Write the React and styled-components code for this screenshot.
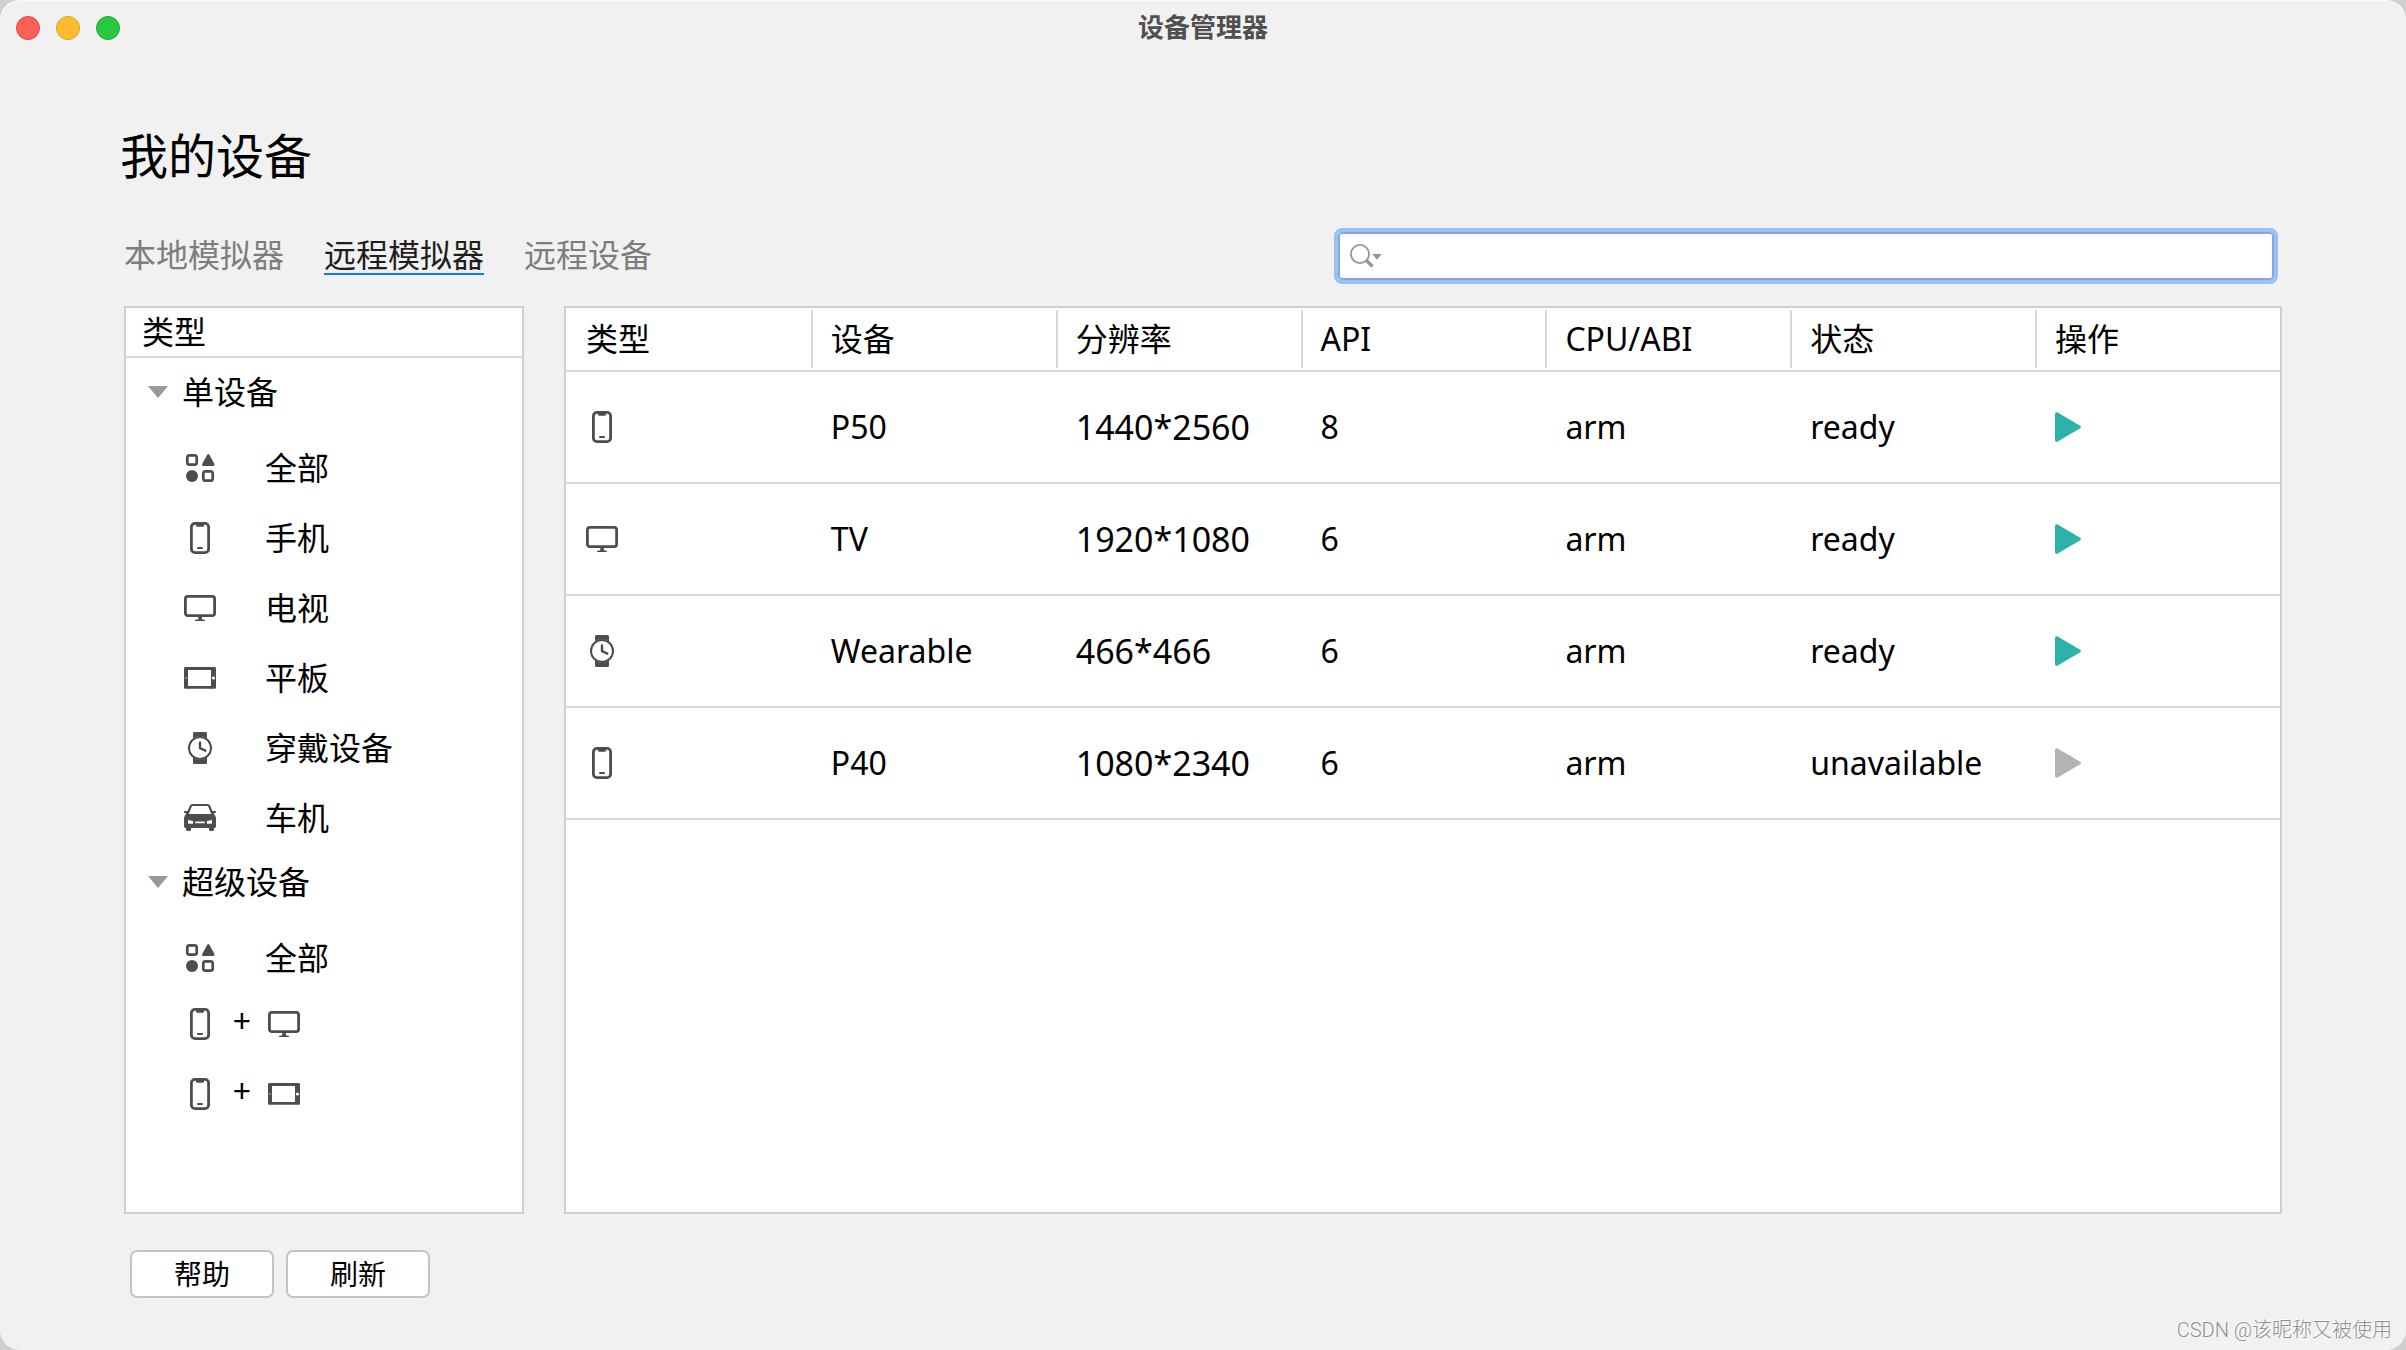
import React, { useState } from "react";
import styled, { createGlobalStyle } from "styled-components";

const tabs = ["本地模拟器", "远程模拟器", "远程设备"];

const singleDevices = [
  { icon: "all", name: "全部" },
  { icon: "phone", name: "手机" },
  { icon: "tv", name: "电视" },
  { icon: "tablet", name: "平板" },
  { icon: "watch", name: "穿戴设备" },
  { icon: "car", name: "车机" },
];

const superDevices = [
  { icon: "all", name: "全部" },
  { icon: "phone", with: "tv" },
  { icon: "phone", with: "tablet" },
];

const columns = ["类型", "设备", "分辨率", "API", "CPU/ABI", "状态", "操作"];

const devices = [
  { icon: "phone", name: "P50", size: "1440*2560", api: 8, abi: "arm", status: "ready" },
  { icon: "tv", name: "TV", size: "1920*1080", api: 6, abi: "arm", status: "ready" },
  { icon: "watch", name: "Wearable", size: "466*466", api: 6, abi: "arm", status: "ready" },
  { icon: "phone", name: "P40", size: "1080*2340", api: 6, abi: "arm", status: "unavailable" },
];

const shapes = {
  all: (
    <>
      <rect x="3.3" y="3.3" width="9.4" height="9.4" rx="2.2" fill="none" stroke="currentColor" strokeWidth="2.7" />
      <rect x="19.3" y="19.3" width="9.4" height="9.4" rx="2.2" fill="none" stroke="currentColor" strokeWidth="2.7" />
      <circle cx="8" cy="24" r="6" />
      <path d="M23.2 2.7c.6-.9 1.700-.9 2.200 0l5 9.300c.5 1-.1 2-1.200 2h-9.800c-1.100 0-1.700-1-1.200-2z" />
    </>
  ),
  phone: (
    <>
      <rect x="7.4" y="1.4" width="17.2" height="29.2" rx="3.6" fill="none" stroke="currentColor" strokeWidth="2.8" />
      <path d="M12 2h8v1.200c0 1-.7 1.500-1.500 1.500h-5c-.8 0-1.500-.5-1.500-1.500zM14 25h4a1 1 0 0 1 0 2h-4a1 1 0 0 1 0-2z" />
    </>
  ),
  tv: (
    <>
      <rect x="1.4" y="4.4" width="29.2" height="19.2" rx="2.4" fill="none" stroke="currentColor" strokeWidth="2.8" />
      <path d="M14.3 24.5h3.600v2.700l3.100.9v.9H11v-.9l3.300-.9z" />
    </>
  ),
  tablet: (
    <>
      <path
        fillRule="evenodd"
        d="M1.600 5h28.800c.9 0 1.600.7 1.600 1.600v18.600c0 .9-.7 1.600-1.600 1.600H1.600c-.9 0-1.600-.7-1.600-1.600V6.600c0-.9.7-1.600 1.600-1.600zM4 8v16h23V8z"
      />
      <circle cx="29.4" cy="16" r="1.6" fill="#fff" />
      <circle cx="2" cy="16" r=".9" fill="#aaa" />
    </>
  ),
  watch: (
    <>
      <path d="M9 6.500V1.600C9 .7 9.700 0 10.600 0h10.800c.9 0 1.600.7 1.600 1.600v4.900c-4-3-10-3-14 0zM9 25.500c4 3 10 3 14 0v4.900c0 .9-.7 1.600-1.600 1.600H10.600c-.9 0-1.600-.7-1.600-1.600z" />
      <circle cx="16" cy="16" r="11" fill="#fff" stroke="currentColor" strokeWidth="2" />
      <path d="M16 10.500v5.700l5.300 2.500" fill="none" stroke="currentColor" strokeWidth="2.4" strokeLinecap="round" strokeLinejoin="round" />
    </>
  ),
  car: (
    <>
      <path
        fillRule="evenodd"
        d="M8.500 2h15c1.200 0 2.200.7 2.700 1.800L28.500 9H31c.6 0 1 .4 1 1s-.4 1.200-1 1.200h-1.600l1.400 1.900c.8 1 1.200 2.200 1.200 3.400v7.700c0 1-.8 1.800-1.800 1.800H30v1.500c0 .9-.7 1.500-1.600 1.500h-1.800c-.9 0-1.600-.6-1.600-1.500V26H7v1.500C7 28.400 6.300 29 5.400 29H3.600C2.700 29 2 28.400 2 27.500V26h-.2C.8 26 0 25.200 0 24.200v-7.700c0-1.200.4-2.400 1.200-3.400l1.400-1.900H1c-.6 0-1-.6-1-1.200s.4-1 1-1h2.500l2.300-5.200C6.300 2.700 7.300 2 8.500 2zM8.900 4c-.6 0-1.100.3-1.300.9L4.800 12h22.400l-2.800-7.100c-.2-.6-.7-.9-1.300-.9z"
      />
      <path d="M4 18l5 1v2.700H5c-.6 0-1-.4-1-1zM28 18l-5 1v2.700h4c.6 0 1-.4 1-1z" fill="#fff" />
      <path d="M12 20.400h8" stroke="#fff" strokeWidth="1.800" strokeLinecap="round" />
    </>
  ),
};

const DeviceIcon = ({ type }) => (
  <IconSvg viewBox="0 0 32 32" aria-hidden="true">
    {shapes[type]}
  </IconSvg>
);

const DeviceGroup = ({ title, items }) => {
  const [open, setOpen] = useState(true);

  return (
    <>
      <GroupBtn aria-expanded={open} onClick={() => setOpen(!open)}>
        <Arrow viewBox="0 0 20 12" $open={open} aria-hidden="true">
          <path d="M0 0h20L10 12z" />
        </Arrow>
        {title}
      </GroupBtn>
      {open && (
        <List>
          {items.map((item) => (
            <li key={item.name || item.with}>
              {item.with ? (
                <ItemBtn $pair aria-label={`${item.icon} + ${item.with}`}>
                  <DeviceIcon type={item.icon} />
                  <Plus>+</Plus>
                  <DeviceIcon type={item.with} />
                </ItemBtn>
              ) : (
                <ItemBtn>
                  <DeviceIcon type={item.icon} />
                  <ItemName>{item.name}</ItemName>
                </ItemBtn>
              )}
            </li>
          ))}
        </List>
      )}
    </>
  );
};

const App = () => {
  const [tab, setTab] = useState(tabs[1]);
  const [keyword, setKeyword] = useState("");

  return (
    <>
      <GlobalStyle />
      <Window>
        <TitleBar>
          <Lights>
            <Light aria-label="close" $color="#ff5f57" $edge="#e2463f" />
            <Light aria-label="minimize" $color="#febc2e" $edge="#e0a028" />
            <Light aria-label="zoom" $color="#28c840" $edge="#1dad2b" />
          </Lights>
          <WindowTitle>设备管理器</WindowTitle>
        </TitleBar>

        <Content>
          <Heading>我的设备</Heading>

          <Toolbar>
            <Tabs>
              {tabs.map((name) => (
                <Tab key={name} $active={name === tab} onClick={() => setTab(name)}>
                  {name}
                </Tab>
              ))}
            </Tabs>
            <SearchBox>
              <SearchSvg viewBox="0 0 32 24" aria-hidden="true">
                <circle cx="10" cy="10" r="9.1" fill="none" stroke="#8c979e" strokeWidth="1.8" />
                <path d="M16.500 16.500l6 6" stroke="#8c979e" strokeWidth="3.2" />
                <path d="M22.300 10h9.400L27 15.700z" fill="#8c979e" />
              </SearchSvg>
              <SearchInput
                aria-label="搜索"
                value={keyword}
                onChange={(e) => {
                  setKeyword(e.target.value);
                }}
              />
            </SearchBox>
          </Toolbar>

          <Panels>
            <Sidebar>
              <SidebarTitle>类型</SidebarTitle>
              <Tree>
                <DeviceGroup title="单设备" items={singleDevices} />
                <DeviceGroup title="超级设备" items={superDevices} />
              </Tree>
            </Sidebar>

            <TablePanel>
              <Table>
                <thead>
                  <tr>
                    {columns.map((name) => (
                      <Th key={name}>
                        <HeadCell>{name}</HeadCell>
                      </Th>
                    ))}
                  </tr>
                </thead>
                <tbody>
                  {devices.map((device) => (
                    <tr key={device.name}>
                      <Td>
                        <DeviceIcon type={device.icon} />
                      </Td>
                      <Td>{device.name}</Td>
                      <Td $wide>{device.size}</Td>
                      <Td>{device.api}</Td>
                      <Td>{device.abi}</Td>
                      <Td>{device.status}</Td>
                      <Td>
                        <PlayBtn aria-label={`run ${device.name}`} disabled={device.status !== "ready"}>
                          <svg viewBox="0 0 26 30" aria-hidden="true">
                            <path d="M0 2C0 .5 1.400-.2 2.700.5l22.500 13.200c1 .6 1 1.900 0 2.500L2.700 29.500C1.400 30.200 0 29.500 0 28z" />
                          </svg>
                        </PlayBtn>
                      </Td>
                    </tr>
                  ))}
                </tbody>
              </Table>
            </TablePanel>
          </Panels>

          <Footer>
            <FooterBtn>帮助</FooterBtn>
            <FooterBtn>刷新</FooterBtn>
          </Footer>
        </Content>
        <Watermark>CSDN @该昵称又被使用</Watermark>
      </Window>
    </>
  );
};

export default App;

// style
const GlobalStyle = createGlobalStyle`
  * {
    box-sizing: border-box;
  }
  body {
    margin: 0;
    background: #cfcfcf;
    color: #000;
    font-family: "Noto Sans", "Noto Sans CJK SC", sans-serif;
    font-size: 32px;
    line-height: 36px;
  }
  button,
  input {
    padding: 0;
    border: none;
    background: transparent;
    color: inherit;
    font: inherit;
  }
`;
const Window = styled.div`
  position: relative;
  min-height: 100vh;
  display: flex;
  flex-direction: column;
  background: #f1f1f1;
  border-radius: 20px;
  box-shadow: inset 0 1px 0 #fafafa;
`;
const TitleBar = styled.header`
  height: 56px;
  padding: 0 16px;
  display: grid;
  grid-template-columns: 1fr auto 1fr;
  align-items: center;
`;
const Lights = styled.div`
  display: flex;
  gap: 16px;
`;
const Light = styled.button`
  width: 24px;
  height: 24px;
  border: 1px solid ${(props) => props.$edge};
  border-radius: 50%;
  background: ${(props) => props.$color};
`;
const WindowTitle = styled.div`
  padding-bottom: 2px;
  color: #505050;
  font-size: 26px;
  font-weight: 700;
`;
const Content = styled.main`
  flex: 1;
  display: flex;
  flex-direction: column;
  padding: 66px 120px 52px;
`;
const Heading = styled.h1`
  margin: 0 0 38px;
  font-size: 48px;
  font-weight: 400;
  line-height: 68px;
`;
const Toolbar = styled.div`
  display: flex;
  align-items: center;
  justify-content: space-between;
  gap: 40px;
  padding: 0 8px 0 4px;
`;
const Tabs = styled.nav`
  display: flex;
  gap: 40px;
`;
const Tab = styled.button`
  border-bottom: 2px solid ${(props) => (props.$active ? "#0a7aff" : "transparent")};
  color: ${(props) => (props.$active ? "#1e1e1e" : "#7d7d7d")};
  white-space: nowrap;
`;
const SearchBox = styled.label`
  flex: 0 1 944px;
  height: 56px;
  display: flex;
  align-items: center;
  gap: 8px;
  padding: 0 12px;
  border: 4px solid #98c1f5;
  border-radius: 8px;
  background: #fff;
  box-shadow: inset 0 0 0 2px #82abdd;
`;
const SearchSvg = styled.svg`
  width: 32px;
  height: 24px;
`;
const SearchInput = styled.input`
  flex: 1;
  min-width: 0;
  outline: none;
`;
const Panels = styled.div`
  flex: 1;
  display: flex;
  gap: 40px;
  padding: 22px 4px 36px;
`;
const Sidebar = styled.aside`
  flex: 0 0 400px;
  border: 2px solid #cfcfcf;
  background: #fff;
`;
const SidebarTitle = styled.div`
  height: 50px;
  padding: 6px 16px;
  border-bottom: 2px solid #d9d9d9;
`;
const Tree = styled.div`
  padding-top: 5px;
`;
const GroupBtn = styled.button`
  width: 100%;
  height: 58px;
  display: flex;
  align-items: center;
  gap: 14px;
  margin-bottom: 12px;
  padding-left: 22px;
`;
const Arrow = styled.svg`
  width: 20px;
  height: 12px;
  fill: #999;
  transform: rotate(${(props) => (props.$open ? 0 : -90)}deg);
`;
const List = styled.ul`
  margin: 0;
  padding: 0;
  list-style: none;
`;
const ItemBtn = styled.button`
  width: 100%;
  height: 70px;
  display: flex;
  align-items: center;
  padding: 0 0 ${(props) => (props.$pair ? 8 : 0)}px 58px;
`;
const ItemName = styled.span`
  padding-left: 49px;
`;
const Plus = styled.span`
  width: 52px;
  padding-bottom: 6px;
  text-align: center;
`;
const IconSvg = styled.svg`
  display: block;
  width: 32px;
  height: 32px;
  color: #4d4d4d;
  fill: currentColor;
`;
const TablePanel = styled.section`
  flex: 1;
  min-width: 0;
  border: 2px solid #cfcfcf;
  background: #fff;
`;
const Table = styled.table`
  width: 100%;
  table-layout: fixed;
  border-spacing: 0;
`;
const Th = styled.th`
  padding: 2px 0;
  border-bottom: 2px solid #d9d9d9;
  font-weight: 400;
  text-align: left;
`;
const HeadCell = styled.div`
  height: 58px;
  padding: 11px 18px;
  border-left: 2px solid #d9d9d9;
  ${Th}:first-child & {
    border-left-color: transparent;
  }
`;
const Td = styled.td`
  height: 112px;
  padding: 0 20px;
  border-bottom: 2px solid #d9d9d9;
  font-size: ${(props) => (props.$wide ? 34 : 32)}px;
`;
const PlayBtn = styled.button`
  display: block;
  width: 26px;
  height: 30px;
  fill: #2db1a8;
  svg {
    display: block;
  }
  &:disabled {
    fill: #b3b3b3;
  }
`;
const Footer = styled.footer`
  display: flex;
  gap: 12px;
  padding: 0 10px;
`;
const FooterBtn = styled.button`
  width: 144px;
  height: 48px;
  border: 2px solid #c4c4c4;
  border-radius: 7px;
  background: #fff;
  font-size: 28px;
`;
const Watermark = styled.div`
  position: absolute;
  right: 14px;
  bottom: 8px;
  color: #8f8f8f;
  font-family: Roboto, "Noto Sans CJK SC", sans-serif;
  font-size: 20px;
  font-weight: 300;
  line-height: 24px;
  text-shadow: -1px -1px 0 #fff;
`;
